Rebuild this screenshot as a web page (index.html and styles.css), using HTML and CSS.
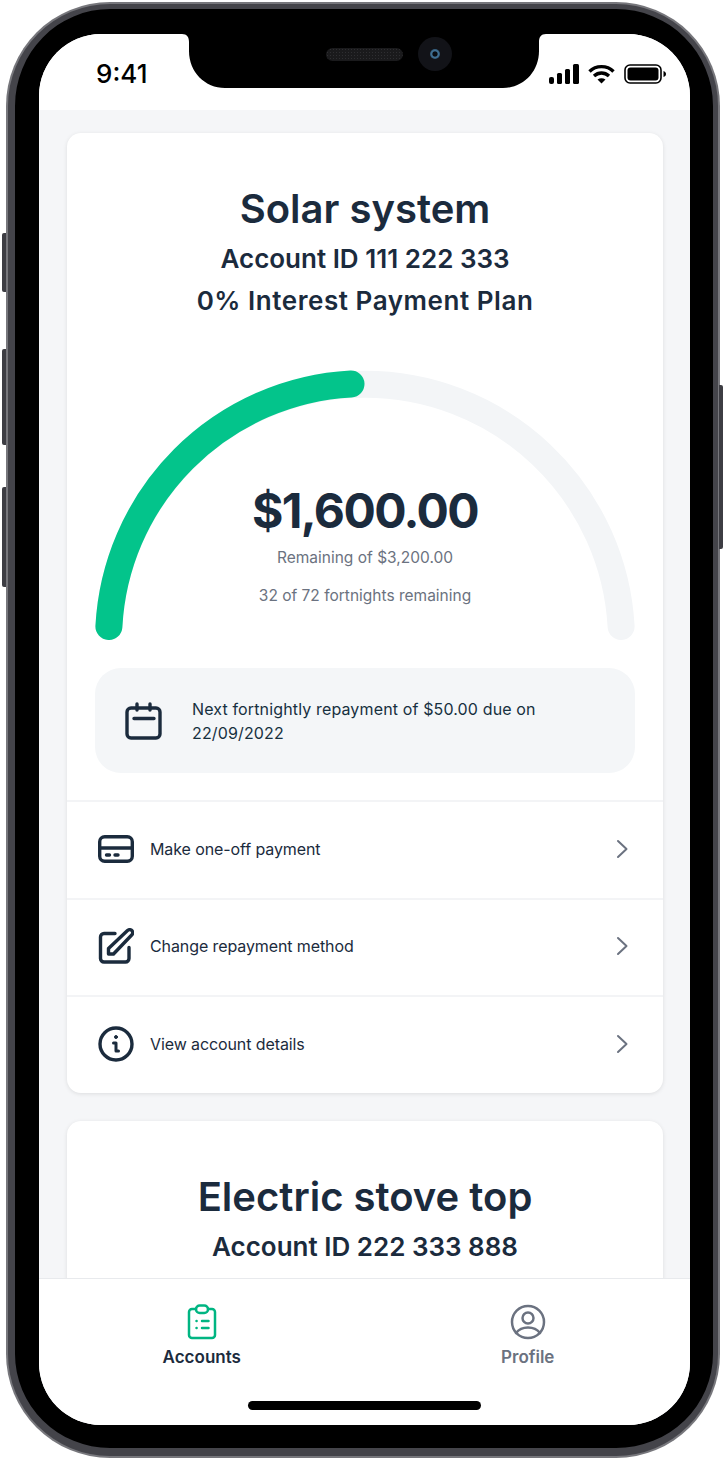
FILE: index.html
```html
<!DOCTYPE html>
<html lang="en">
<head>
    <meta charset="UTF-8">
    <meta name="viewport" content="width=device-width, initial-scale=1.0">
    <title>Accounts</title>
    <link rel="stylesheet" href="styles.css">
</head>
<body>

    <div class="phone">
        <!-- Side buttons -->
        <span class="side-button mute"></span>
        <span class="side-button volume-up"></span>
        <span class="side-button volume-down"></span>
        <span class="side-button power"></span>

        <div class="bezel">
            <div class="screen">
                <!-- Notch with speaker and camera -->
                <svg class="notch" width="364" height="54" viewBox="0 0 364 54">
                    <path d="M0 0H364C359 0 357 3 357 8V17C357 38 341 54 321 54H43C23 54 7 38 7 17V8C7 3 5 0 0 0Z" fill="#000"/>
                </svg>
                <span class="speaker"></span>
                <span class="camera"><span class="lens"></span></span>

                <!-- Status bar -->
                <div class="status-bar">
                    <span class="time">9:41</span>
                    <div class="status-icons">
                        <svg width="30" height="20" viewBox="0 0 30 20" fill="#000">
                            <rect x="0" y="13" width="5" height="7" rx="2"/>
                            <rect x="8" y="9" width="5" height="11" rx="1.5"/>
                            <rect x="16" y="5" width="5" height="15" rx="1.5"/>
                            <rect x="24" y="0" width="6" height="20" rx="1.5"/>
                        </svg>
                        <svg width="27" height="20" viewBox="0 0 27 20" fill="none" stroke="#000" stroke-width="3.4">
                            <path d="M1.5 7.5C8 1 19 1 25.5 7.5"/>
                            <path d="M6 12C10.5 8 16.5 8 21 12"/>
                            <path d="M13.5 19.5L9.5 15.5C12 13.7 15 13.7 17.5 15.5Z" fill="#000" stroke="none"/>
                        </svg>
                        <svg width="42" height="20" viewBox="0 0 42 20">
                            <rect x="1" y="1" width="36" height="18" rx="5" fill="none" stroke="#000" stroke-width="1.6"/>
                            <rect x="3.5" y="3.5" width="31" height="13" rx="3" fill="#000"/>
                            <path d="M39.5 7C41 7.5 42 8.5 42 10S41 12.5 39.5 13Z" fill="#000"/>
                        </svg>
                    </div>
                </div>

                <div class="content">
                    <!-- First account -->
                    <section class="card">
                        <div class="card-head">
                            <h1>Solar system</h1>
                            <h2>Account ID 111 222 333</h2>
                            <h2 class="plan">0% Interest Payment Plan</h2>
                        </div>

                        <div class="gauge">
                            <svg width="540" height="270" viewBox="0 0 540 270" fill="none" stroke-width="27" stroke-linecap="round">
                                <path d="M13.9 256.5A256.5 256.5 0 0 1 526.1 256.5" stroke="#f3f5f7"/>
                                <path d="M13.9 256.5A256.5 256.5 0 0 1 256 14" stroke="#03c48b"/>
                            </svg>
                            <div class="gauge-text">
                                <div class="amount">$1,600.00</div>
                                <div class="note">Remaining of $3,200.00</div>
                                <div class="note second">32 of 72 fortnights remaining</div>
                            </div>
                        </div>

                        <div class="next-payment">
                            <svg width="37" height="38" viewBox="0 0 37 38" fill="none" stroke="#1b2b3d" stroke-width="3.400" stroke-linecap="round">
                                <rect x="2" y="6" width="33" height="30" rx="4"/>
                                <path d="M12 2V8M25 2V8M9 16.500H29"/>
                            </svg>
                            <p>Next fortnightly repayment of $50.00 due on 22/09/2022</p>
                        </div>

                        <ul class="actions">
                            <li class="action">
                                <svg width="36" height="28" viewBox="0 0 36 28" fill="none" stroke="#1b2b3d" stroke-width="3.400" stroke-linecap="round">
                                    <rect x="1.700" y="1.700" width="32.600" height="24.600" rx="5"/>
                                    <path d="M1.700 13H34.300M8.500 20H11.500M17 20H20"/>
                                </svg>
                                <span>Make one-off payment</span>
                                <svg class="chevron" width="12" height="20" viewBox="0 0 12 20" fill="none" stroke="#6b7280" stroke-width="2" stroke-linecap="round" stroke-linejoin="round">
                                    <path d="M2 2L10.500 10L2 18"/>
                                </svg>
                            </li>
                            <li class="action">
                                <svg width="36" height="36" viewBox="0 0 36 36" fill="none" stroke="#1b2b3d" stroke-width="3.400" stroke-linecap="round" stroke-linejoin="round">
                                    <path d="M17 5.500H6A3.500 3.500 0 0 0 2.500 9V30.500A3.500 3.500 0 0 0 6 34H27.500A3.500 3.500 0 0 0 31 30.500V19.500"/>
                                    <path d="M10.500 26V20.500L29.500 2.500C31 1.200 33 1.500 34 2.700C35 4 35 5.700 33.700 7L15.500 26Z"/>
                                </svg>
                                <span>Change repayment method</span>
                                <svg class="chevron" width="12" height="20" viewBox="0 0 12 20" fill="none" stroke="#6b7280" stroke-width="2" stroke-linecap="round" stroke-linejoin="round">
                                    <path d="M2 2L10.500 10L2 18"/>
                                </svg>
                            </li>
                            <li class="action">
                                <svg width="36" height="36" viewBox="0 0 36 36" fill="none" stroke="#1b2b3d" stroke-width="3.400" stroke-linecap="round" stroke-linejoin="round">
                                    <circle cx="18" cy="18" r="16"/>
                                    <path d="M15.500 17H18V25H20.500" stroke-width="3"/>
                                    <circle cx="18" cy="11" r="1.500" fill="#1b2b3d" stroke-width="1"/>
                                </svg>
                                <span>View account details</span>
                                <svg class="chevron" width="12" height="20" viewBox="0 0 12 20" fill="none" stroke="#6b7280" stroke-width="2" stroke-linecap="round" stroke-linejoin="round">
                                    <path d="M2 2L10.500 10L2 18"/>
                                </svg>
                            </li>
                        </ul>
                    </section>

                    <!-- Second account, runs under the tab bar -->
                    <section class="card cut-off">
                        <div class="card-head">
                            <h1>Electric stove top</h1>
                            <h2>Account ID 222 333 888</h2>
                        </div>
                    </section>
                </div>

                <!-- Tab bar -->
                <nav class="tab-bar">
                    <div class="tab active">
                        <svg width="30" height="36" viewBox="0 0 30 36" fill="none" stroke="#00b582" stroke-width="2.500" stroke-linecap="round" stroke-linejoin="round">
                            <path d="M9 5H5A3 3 0 0 0 2 8V31A3 3 0 0 0 5 34H25A3 3 0 0 0 28 31V8A3 3 0 0 0 25 5H21"/>
                            <rect x="9" y="1.500" width="12" height="7.500" rx="3.750"/>
                            <path d="M9.500 17H9.600M15 17H21.500M9.500 24H9.600M15 24H21.500"/>
                        </svg>
                        <span>Accounts</span>
                    </div>
                    <div class="tab">
                        <svg width="36" height="36" viewBox="0 0 36 36" fill="none" stroke="#6b7280" stroke-width="2.500" stroke-linecap="round">
                            <circle cx="18" cy="18" r="16"/>
                            <circle cx="18" cy="14" r="5.500"/>
                            <path d="M6 29C9 25 13 23.500 18 23.500S27 25 30 29"/>
                        </svg>
                        <span>Profile</span>
                    </div>
                </nav>
                <span class="home-indicator"></span>
            </div>
        </div>
    </div>

</body>
</html>
```

FILE: styles.css
```css
/* Page and device frame */
body {
    margin: 0;
    width: 724px;
    height: 1460px;
    overflow: hidden;
    background-color: #fff;
    font-family: Inter, "Liberation Sans", sans-serif;
    color: #1b2b3d;
}

.phone {
    position: relative;
    box-sizing: border-box;
    width: 714px;
    height: 1456px;
    margin: 2px 4px 2px 6px;
    padding: 2px;
    border-radius: 104px;
    background-color: #77777c;
}

.bezel {
    box-sizing: border-box;
    height: 100%;
    padding: 25px 23px 23px 24px;
    border-style: solid;
    border-color: #44444a;
    border-width: 5px 5px 8px 7px;
    border-radius: 102px;
    background-color: #000;
}

.side-button {
    position: absolute;
    width: 4px;
    background-color: #3d3d43;
}

.side-button.mute {
    left: -4px;
    top: 231px;
    height: 59px;
    border-radius: 2px 0 0 2px;
}

.side-button.volume-up {
    left: -4px;
    top: 347px;
    height: 96px;
    border-radius: 2px 0 0 2px;
}

.side-button.volume-down {
    left: -4px;
    top: 485px;
    height: 100px;
    border-radius: 2px 0 0 2px;
}

.side-button.power {
    right: -3px;
    top: 383px;
    height: 164px;
    border-radius: 0 2px 2px 0;
}

/* Screen */
.screen {
    position: relative;
    display: flex;
    flex-direction: column;
    height: 1391px;
    overflow: hidden;
    border-radius: 62px;
    background-color: #f5f6f8;
}

.notch {
    position: absolute;
    left: 143px;
    top: 0;
}

.speaker {
    position: absolute;
    left: 287px;
    top: 14px;
    width: 77px;
    height: 13px;
    border-radius: 7px;
    background-color: #1a1a1c;
    background-image: radial-gradient(#2e2e31 1px, transparent 1px);
    background-size: 3px 3px;
}

.camera {
    position: absolute;
    left: 379px;
    top: 3px;
    width: 34px;
    height: 34px;
    border-radius: 50%;
    background-color: #121318;
}

.lens {
    position: absolute;
    left: 12px;
    top: 12px;
    width: 10px;
    height: 10px;
    border-radius: 50%;
    background: radial-gradient(circle at 50% 50%, #0a0d12 30%, #44779c 45%, #1c3347 100%);
}

.status-bar {
    display: flex;
    flex: none;
    justify-content: space-between;
    align-items: flex-start;
    height: 76px;
    padding: 28px 24px 0 57px;
    box-sizing: border-box;
    background-color: #fff;
}

.time {
    font-size: 26px;
    font-weight: 500;
    line-height: 24px;
    color: #000;
}

.status-icons {
    display: flex;
    gap: 9px;
    margin-top: 2px;
}

/* Scrolling content */
.content {
    flex: 1;
    min-height: 0;
    overflow: hidden;
    padding: 23px 27px 0 28px;
}

.card {
    margin-bottom: 28px;
    border-radius: 14px;
    background-color: #fff;
    box-shadow: 0 1px 4px rgba(0, 0, 0, 0.1);
}

.card.cut-off {
    min-height: 200px;
}

.card-head {
    padding-top: 50px;
    text-align: center;
}

.card-head h1 {
    margin: 0 0 6px;
    font-size: 40px;
    font-weight: 600;
    line-height: 52px;
}

.card-head h2 {
    margin: 0 0 6px;
    font-size: 26px;
    font-weight: 600;
    line-height: 36px;
}

.card-head h2.plan {
    letter-spacing: 0.55px;
}

/* Gauge */
.gauge {
    position: relative;
    width: 540px;
    height: 270px;
    margin: 51px auto 0;
}

.gauge svg {
    display: block;
}

.gauge-text {
    position: absolute;
    left: 0;
    right: 0;
    top: 112px;
    text-align: center;
}

.amount {
    font-size: 48px;
    font-weight: 700;
    line-height: 58px;
    letter-spacing: -1.6px;
}

.note {
    margin-top: 6px;
    font-size: 15.5px;
    line-height: 24px;
    color: #6b7280;
}

.note.second {
    margin-top: 14px;
}

/* Next repayment */
.next-payment {
    display: flex;
    align-items: center;
    gap: 30px;
    box-sizing: border-box;
    width: 540px;
    height: 105px;
    margin: 28px auto 0;
    padding: 0 80px 0 30px;
    border-radius: 26px;
    background-color: #f4f6f8;
}

.next-payment svg {
    flex: none;
}

.next-payment p {
    margin: 0;
    font-size: 16px;
    line-height: 24px;
    letter-spacing: 0.14px;
    color: #17303f;
}

/* Action rows */
.actions {
    margin: 27px 0 0;
    padding: 0;
    list-style: none;
}

.action {
    display: flex;
    align-items: center;
    height: 93.5px;
    padding: 0 35px 2px 31px;
    border-top: 2px solid #f3f4f6;
    font-size: 16px;
    letter-spacing: -0.1px;
}

.action svg {
    flex: none;
}

.action span {
    flex: 1;
    margin-left: 16px;
}

/* Tab bar */
.tab-bar {
    display: grid;
    position: relative;
    flex: none;
    grid-template-columns: 1fr 1fr;
    box-sizing: border-box;
    height: 147px;
    padding-top: 25px;
    border-top: 1px solid #e8eaed;
    background-color: #fff;
}

.tab {
    display: flex;
    flex-direction: column;
    align-items: center;
    font-size: 17px;
    font-weight: 600;
    color: #6b7280;
}

.tab span {
    margin-top: 7px;
}

.tab:last-child {
    padding-left: 1px;
}

.tab.active {
    color: #1b2b3d;
}

.home-indicator {
    position: absolute;
    left: 209px;
    bottom: 15px;
    width: 233px;
    height: 9px;
    border-radius: 5px;
    background-color: #000;
}
```
